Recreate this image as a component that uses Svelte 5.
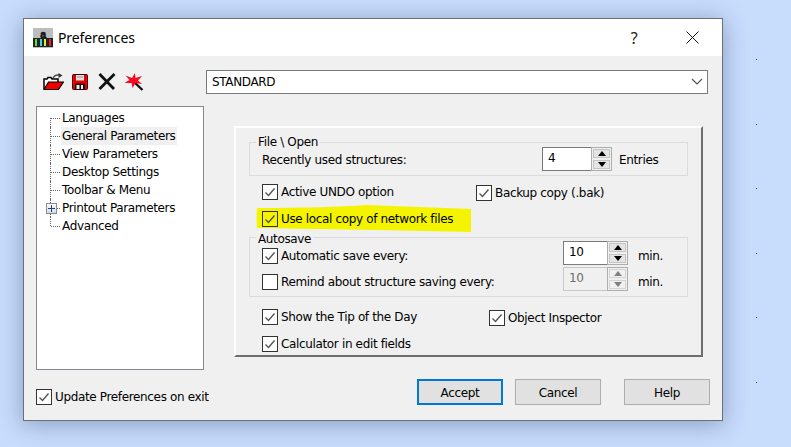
<script>
  const treeItems = [
    { label: 'Languages' },
    { label: 'General Parameters', selected: true },
    { label: 'View Parameters' },
    { label: 'Desktop Settings' },
    { label: 'Toolbar & Menu' },
    { label: 'Printout Parameters', expander: true },
    { label: 'Advanced', last: true }
  ];

  const dots = [59, 124, 188, 253, 317, 382];
</script>

{#snippet check(label, checked = true, extra = '')}
  <label class="check {extra}">
    <span class="box">
      {#if checked}
        <svg width="14" height="14" viewBox="0 0 14 14"><path d="M2.5 7.5 5.5 10.5 11.5 3.5" fill="none" stroke="#555" stroke-width="1.4" /></svg>
      {/if}
    </span>
    <span>{label}</span>
  </label>
{/snippet}

{#snippet spin(value, disabled = false)}
  <div class="spin" class:disabled>
    <div class="spin-input">{value}</div>
    <div class="spin-btns">
      <span class="spin-btn"><i class="arrow up"></i></span>
      <span class="spin-btn"><i class="arrow down"></i></span>
    </div>
  </div>
{/snippet}

{#each dots as y}
  <span class="dot" style="top: {y}px"></span>
{/each}

<div class="window">
  <div class="titlebar">
    <svg class="app-icon" width="20" height="20" viewBox="0 0 20 20">
      <rect width="20" height="20" fill="#bdbdbd" />
      <text x="10" y="9.800" text-anchor="middle" font-size="10.500" font-weight="700" font-family="Liberation Sans, sans-serif" fill="#111" stroke="#111" stroke-width="0.500">a</text>
      <rect x="0" y="10" width="20" height="9" fill="#222" />
      <rect x="2" y="11" width="2" height="7" fill="#5fe03a" />
      <rect x="7" y="11" width="2" height="7" fill="#30d8e8" />
      <rect x="11" y="11" width="2" height="7" fill="#e8e830" />
      <rect x="16" y="11" width="2" height="7" fill="#e82020" />
    </svg>
    <span class="title">Preferences</span>
    <span class="help-q">?</span>
    <svg class="close" width="13" height="13" viewBox="0 0 13 13"><path d="M.5.5l12 12M12.5.5l-12 12" stroke="#111" stroke-width="1" fill="none" /></svg>
  </div>

  <div class="content">
    <div class="toolbar-row">
      <div class="tools">
        <svg width="21" height="18" viewBox="0 0 21 18">
          <path d="M10 5 Q12 1.500 16 2" fill="none" stroke="#444" stroke-width="1.300" />
          <path d="M15.500 0 19.500 2.500 15.500 5z" fill="#333" />
          <path d="M1 16V6h3l1-1.500h3l1 1.500h6v3" fill="#fff" stroke="#000" stroke-width="1.500" />
          <path d="M1 16.500 5.500 9h15l-5 7.500z" fill="#f00000" stroke="#000" stroke-width="1.200" />
        </svg>
        <svg width="16" height="16" viewBox="0 0 16 16">
          <rect x=".5" y=".5" width="15" height="15" rx="1" fill="#e80000" stroke="#400" />
          <rect x="4" y="1" width="8" height="5.500" fill="#dcdcdc" />
          <rect x="5" y="2.500" width="6" height="1" fill="#999" />
          <rect x="3" y="9.500" width="10" height="6" fill="#111" />
          <rect x="4.500" y="11" width="3" height="4" fill="#e8e8e8" />
          <rect x="9" y="11" width="2" height="4" fill="#e8e8e8" />
        </svg>
        <svg class="x-icon" width="18" height="17" viewBox="0 0 18 17">
          <path d="M1.500 1 16 16M16.500 1 1.500 16" stroke="#111" stroke-width="2.800" fill="none" />
        </svg>
        <svg width="20" height="18" viewBox="0 0 20 18">
          <path d="M9 8 18.500 17" stroke="#111" stroke-width="2.400" fill="none" />
          <path d="M11 0 11.500 5 18 3 14 7.500 18 11 11.500 10 8.500 15 7.500 10 .5 10 5.500 7 1.500 2.500 8 5z" fill="#f80820" />
        </svg>
      </div>
      <div class="combo">
        <span>STANDARD</span>
        <svg width="12" height="7" viewBox="0 0 12 7"><path d="M1 1l5 5 5-5" fill="none" stroke="#555" stroke-width="1.200" /></svg>
      </div>
    </div>

    <div class="main-row">
      <div class="tree">
        {#each treeItems as item}
          <div class="tree-row" class:last={item.last}>
            {#if item.expander}
              <span class="expander"></span>
            {/if}
            <span class="tree-label" class:selected={item.selected}>{item.label}</span>
          </div>
        {/each}
      </div>

      <div class="panel">
        <div class="group file-group">
          <span class="legend">File \ Open</span>
          <span class="grow">Recently used structures:</span>
          {@render spin('4')}
          <span class="entries">Entries</span>
        </div>

        <div class="opts-row">
          <div class="col-a">{@render check('Active UNDO option')}</div>
          {@render check('Backup copy (.bak)')}
        </div>
        <div class="opts-row marked">
          <svg class="marker" width="216" height="28" viewBox="0 0 216 28"><path d="M1 3 Q70 3 110 0 L215 4 V27 L120 25 Q60 24 1 23 Q0 14 1 3z" fill="#f4f400" /></svg>
          {@render check('Use local copy of network files', true, 'clear')}
        </div>

        <div class="group auto-group">
          <span class="legend">Autosave</span>
          <div class="auto-row">
            <div class="grow">{@render check('Automatic save every:')}</div>
            {@render spin('10')}
            <span class="min">min.</span>
          </div>
          <div class="auto-row">
            <div class="grow">{@render check('Remind about structure saving every:', false)}</div>
            {@render spin('10', true)}
            <span class="min">min.</span>
          </div>
        </div>

        <div class="opts-row tip-row">
          <div class="col-b">{@render check('Show the Tip of the Day')}</div>
          {@render check('Object Inspector')}
        </div>
        <div class="opts-row">
          {@render check('Calculator in edit fields')}
        </div>
      </div>
    </div>

    <div class="footer">
      <div class="grow exit-check">{@render check('Update Preferences on exit')}</div>
      <button class="default">Accept</button>
      <button>Cancel</button>
      <button class="help">Help</button>
    </div>
  </div>
</div>

<style>
  :global(body) {
    background: #c8dcfc;
    overflow: hidden;
    height: 447px;
  }

  .dot {
    position: absolute;
    left: 756px;
    width: 1px;
    height: 1px;
    background: #2a3ee8;
  }

  .window {
    margin: 18px 0 0 23px;
    width: 700px;
    height: 403px;
    box-sizing: border-box;
    border: 1px solid #6b7076;
    background: #f0f0f0;
    box-shadow: 0 3px 22px rgba(40, 60, 100, 0.4);
    font-family: "DejaVu Sans", sans-serif;
    font-size: 12px;
    letter-spacing: -0.35px;
    color: #000;
  }

  .titlebar {
    display: flex;
    align-items: center;
    height: 37px;
    background: #fff;
    padding-left: 9px;
  }

  .app-icon {
    flex-shrink: 0;
  }

  .title {
    margin-left: 5px;
    flex: 1;
    font-size: 14px;
    letter-spacing: -0.1px;
    font-family: "Noto Sans", sans-serif;
  }

  .help-q {
    font-size: 16px;
    font-family: "Noto Sans", sans-serif;
    width: 12px;
    text-align: center;
    color: #222;
  }

  .close {
    margin: 0 23px 0 46px;
  }

  .content {
    padding: 14px 0 0 12px;
  }

  .toolbar-row {
    display: flex;
    align-items: center;
    height: 23px;
  }

  .tools {
    width: 170px;
    padding-left: 7px;
    box-sizing: border-box;
    display: flex;
    align-items: center;
    gap: 8px;
  }

  .x-icon {
    margin-left: 2px;
  }

  .combo {
    width: 502px;
    height: 24px;
    box-sizing: border-box;
    border: 1px solid #7a7a7a;
    background: #fff;
    display: flex;
    align-items: center;
    justify-content: space-between;
    padding: 0 4px 0 5px;
  }

  .main-row {
    display: flex;
    margin-top: 13px;
  }

  .tree {
    width: 168px;
    height: 264px;
    box-sizing: border-box;
    border: 1px solid #828790;
    background: #fff;
    padding-top: 2px;
  }

  .tree-row {
    position: relative;
    height: 18px;
    padding-left: 24px;
    display: flex;
    align-items: center;
  }

  .tree-row::before {
    content: "";
    position: absolute;
    left: 13px;
    top: 0;
    bottom: 0;
    border-left: 1px dotted #666;
  }

  .tree-row:first-child::before {
    top: 9px;
  }

  .tree-row.last::before {
    bottom: 9px;
  }

  .tree-row::after {
    content: "";
    position: absolute;
    left: 14px;
    width: 9px;
    top: 9px;
    border-top: 1px dotted #666;
  }

  .tree-label {
    padding: 0 1px;
    line-height: 18px;
    white-space: nowrap;
  }

  .tree-label.selected {
    background: #f0f0f0;
  }

  .expander {
    position: absolute;
    z-index: 1;
    left: 9px;
    top: 4px;
    width: 9px;
    height: 9px;
    border: 1px solid #8a8f96;
    background:
      linear-gradient(#1f3f8f, #1f3f8f) center / 7px 1px no-repeat,
      linear-gradient(#1f3f8f, #1f3f8f) center / 1px 7px no-repeat,
      linear-gradient(#fff, #d4d8de);
  }

  .panel {
    margin: 20px 0 0 30px;
    width: 469px;
    height: 231px;
    box-sizing: border-box;
    border: 2px solid;
    border-color: #fff #6e6e6e #6e6e6e #fff;
    padding: 14px 13px 0 13px;
  }

  .group {
    position: relative;
    box-sizing: border-box;
    border: 1px solid #dcdcdc;
  }

  .legend {
    position: absolute;
    top: -9px;
    left: 6px;
    padding: 0 2px;
    background: #f0f0f0;
    line-height: 16px;
  }

  .auto-group .legend {
    top: -7px;
  }

  .file-group {
    height: 34px;
    margin-bottom: 3px;
    display: flex;
    align-items: center;
    padding-left: 12px;
  }

  .file-group .grow {
    padding-top: 2px;
  }

  .grow {
    flex: 1;
  }

  .entries {
    width: 75px;
    padding: 2px 0 0 7px;
    box-sizing: border-box;
  }

  .opts-row {
    position: relative;
    display: flex;
    align-items: center;
    height: 26px;
    box-sizing: border-box;
    padding: 2px 0 0 13px;
  }

  .col-a {
    width: 214px;
  }

  .col-b {
    width: 227px;
  }

  .marker {
    position: absolute;
    left: 7px;
    top: 0;
  }

  .marked :global(.check) {
    position: relative;
  }

  .auto-group {
    margin-top: 6px;
    height: 60px;
    padding: 3px 0 0 12px;
  }

  .auto-row {
    display: flex;
    align-items: flex-start;
    height: 26px;
  }

  .auto-row .grow {
    padding-top: 7px;
  }

  .min {
    width: 59px;
    padding: 8px 0 0 10px;
    box-sizing: border-box;
  }

  .tip-row {
    margin-top: 7px;
  }

  .exit-check {
    padding-top: 12px;
  }

  .check {
    display: inline-flex;
    align-items: center;
    gap: 3px;
    white-space: nowrap;
  }

  .box {
    width: 16px;
    height: 16px;
    box-sizing: border-box;
    border: 1px solid #333;
    background: #fff;
    display: flex;
    align-items: center;
    justify-content: center;
  }

  .clear .box {
    background: transparent;
  }

  .spin {
    display: flex;
    height: 24px;
    width: 70px;
    box-sizing: border-box;
  }

  .auto-row .spin {
    width: 65px;
  }

  .spin-input {
    flex: 1;
    box-sizing: border-box;
    border: 1px solid #7a7a7a;
    border-right: 0;
    background: #fff;
    padding-left: 5px;
    line-height: 20px;
  }

  .spin-btns {
    width: 21px;
    box-sizing: border-box;
    border: 1px solid #adadad;
    padding: 1px;
    background: #f0f0f0;
    display: flex;
    flex-direction: column;
    gap: 2px;
  }

  .spin-btn {
    flex: 1;
    border: 1px solid #c4c4c4;
    background: #e4e4e4;
    display: flex;
    align-items: center;
    justify-content: center;
  }

  .arrow {
    width: 0;
    height: 0;
    border-left: 4px solid transparent;
    border-right: 4px solid transparent;
  }

  .arrow.up {
    border-bottom: 5px solid #000;
  }

  .arrow.down {
    border-top: 5px solid #000;
  }

  .disabled .spin-input {
    border-color: #c8c8c8;
    background: #f0f0f0;
    color: #6d6d6d;
  }

  .disabled .spin-btn {
    background: #f0f0f0;
    border-color: #d4d4d4;
  }

  .disabled .arrow.up {
    border-bottom-color: #808080;
  }

  .disabled .arrow.down {
    border-top-color: #808080;
  }

  .footer {
    display: flex;
    align-items: center;
    margin-top: 9px;
    width: 674px;
    height: 26px;
  }

  button {
    width: 86px;
    height: 26px;
    box-sizing: border-box;
    border: 1px solid #adadad;
    background: #e1e1e1;
    font: inherit;
    letter-spacing: inherit;
    color: #000;
    padding: 1px 0 0;
  }

  button.default {
    border: 2px solid #0078d7;
    margin-right: 12px;
  }

  button.help {
    margin-left: 23px;
  }
</style>
